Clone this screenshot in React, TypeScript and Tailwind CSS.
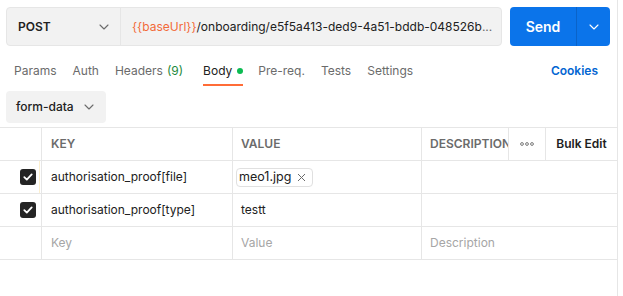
import React from "react";

const Chevron = ({ className = "" }: { className?: string }) => (
  <svg width="10" height="6" viewBox="0 0 10 6" className={className} fill="none">
    <path d="M1 1l4 4 4-4" stroke="currentColor" strokeWidth="1.1" strokeLinecap="round" strokeLinejoin="round" />
  </svg>
);

const Check = () => (
  <div className="w-[16px] h-[16px] rounded-[3px] bg-[#242424] flex items-center justify-center">
    <svg width="10" height="8" viewBox="0 0 10 8" fill="none">
      <path d="M1.3 4.2l2.5 2.4L8.7 1.4" stroke="white" strokeWidth="1.8" strokeLinecap="round" strokeLinejoin="round" />
    </svg>
  </div>
);

export default function App() {
  const font = { fontFamily: "Inter, 'Noto Sans', sans-serif" };
  return (
    <div className="w-[623px] h-[296px] bg-white flex overflow-hidden text-[12px] text-[#212121]" style={font}>
      <div className="w-[617px] flex flex-col">
        {/* Top bar */}
        <div className="flex pt-[7px] pl-[6px] pr-[7px] h-[46px]">
          <div className="w-[496px] h-[39px] flex bg-[#f2f2f2] border border-[#e6e6e6] rounded-[4px]">
            <div className="w-[114px] flex items-center justify-between pl-[11px] pr-[11px] border-r border-[#e6e6e6]">
              <span className="font-semibold text-[#212121]">POST</span>
              <Chevron className="text-[#6b6b6b]" />
            </div>
            <div className="flex-1 flex items-center pl-[11px] pr-[8px] overflow-hidden whitespace-nowrap">
              <span className="text-[#f26b3a]">{"{{baseUrl}}"}</span>
              <span className="text-[#212121]">/onboarding/e5f5a413-ded9-4a51-bddb-048526b</span>
              <span className="text-[#6b6b6b]">...</span>
            </div>
          </div>
          <div className="ml-[8px] w-[100px] h-[39px] flex bg-[#0b74ea] rounded-[4px] text-white">
            <div className="w-[67px] flex items-center justify-center border-r border-[#0a63c9] font-semibold text-[14px]">Send</div>
            <div className="flex-1 flex items-center justify-center">
              <Chevron />
            </div>
          </div>
        </div>

        {/* Tabs */}
        <div className="h-[41px] pt-[8px] flex items-stretch pl-[14px] pr-[19px] text-[#6b6b6b]">
          <div className="flex items-center">Params</div>
          <div className="flex items-center ml-[16px]">Auth</div>
          <div className="flex items-center ml-[16px]">
            Headers<span className="text-[#1e8a3c] ml-[4px]">(9)</span>
          </div>
          <div className="relative flex items-center ml-[20px] text-[#212121]">
            Body
            <span className="ml-[5px] w-[6px] h-[6px] rounded-full bg-[#0cbb52]" />
            <span className="absolute left-0 right-0 bottom-[1px] h-[2px] bg-[#ff6c37]" />
          </div>
          <div className="flex items-center ml-[15px]">Pre-req.</div>
          <div className="flex items-center ml-[16px]">Tests</div>
          <div className="flex items-center ml-[16px]">Settings</div>
          <div className="flex items-center ml-auto text-[#0265d2] font-semibold">Cookies</div>
        </div>

        {/* Body type */}
        <div className="pt-[4px] pl-[6px] h-[40px]">
          <div className="w-[100px] h-[32px] rounded-[4px] bg-[#f2f2f2] flex items-center justify-between pl-[10px] pr-[12px]">
            <span className="text-[#212121] font-medium">form-data</span>
            <Chevron className="text-[#6b6b6b]" />
          </div>
        </div>

        {/* Table */}
        <div className="border-t border-[#e6e6e6]">
          <div className="grid grid-cols-[42px_191px_189px_87px_37px_71px] h-[33px] border-b border-[#e6e6e6] font-semibold text-[#6b6b6b]">
            <div className="border-r border-[#e6e6e6]" />
            <div className="border-r border-[#e6e6e6] flex items-center pl-[9px]">KEY</div>
            <div className="border-r border-[#e6e6e6] flex items-center pl-[8px]">VALUE</div>
            <div className="border-r border-[#e6e6e6] flex items-center pl-[8px] overflow-hidden whitespace-nowrap">DESCRIPTION</div>
            <div className="border-r border-[#e6e6e6] flex items-center justify-center">
              <svg width="14" height="4" viewBox="0 0 14 4">
                <circle cx="2" cy="2" r="1.4" fill="none" stroke="#6b6b6b" strokeWidth="0.9" />
                <circle cx="7" cy="2" r="1.4" fill="none" stroke="#6b6b6b" strokeWidth="0.9" />
                <circle cx="12" cy="2" r="1.4" fill="none" stroke="#6b6b6b" strokeWidth="0.9" />
              </svg>
            </div>
            <div className="flex items-center justify-center text-[#212121]">Bulk Edit</div>
          </div>

          <div className="grid grid-cols-[42px_191px_189px_195px] h-[33px] border-b border-[#e6e6e6]">
            <div className="border-r border-[#e6e6e6] flex items-center justify-end pr-[5px] relative">
              <Check />
              <span className="absolute right-[1px] top-0 bottom-0 w-[1px] bg-[#fdf0cf]" />
            </div>
            <div className="border-r border-[#e6e6e6] flex items-center pl-[9px]">authorisation_proof[file]</div>
            <div className="border-r border-[#e6e6e6] flex items-center pl-[3px]">
              <div className="h-[19px] w-[77px] border border-[#e0e0e0] rounded-[4px] flex items-center pl-[2px] pr-[6px] justify-between text-[12.5px]">
                <span>meo1.jpg</span>
                <svg width="9" height="9" viewBox="0 0 9 9">
                  <path d="M1 1l7 7M8 1l-7 7" stroke="#6b6b6b" strokeWidth="1" />
                </svg>
              </div>
            </div>
            <div />
          </div>

          <div className="grid grid-cols-[42px_191px_189px_195px] h-[33px] border-b border-[#e6e6e6]">
            <div className="border-r border-[#e6e6e6] flex items-center justify-end pr-[5px]">
              <Check />
            </div>
            <div className="border-r border-[#e6e6e6] flex items-center pl-[9px]">authorisation_proof[type]</div>
            <div className="border-r border-[#e6e6e6] flex items-center pl-[8px]">testt</div>
            <div />
          </div>

          <div className="grid grid-cols-[42px_191px_189px_195px] h-[33px] border-b border-[#e6e6e6] text-[#a6a6a6]">
            <div className="border-r border-[#e6e6e6]" />
            <div className="border-r border-[#e6e6e6] flex items-center pl-[9px]">Key</div>
            <div className="border-r border-[#e6e6e6] flex items-center pl-[8px]">Value</div>
            <div className="flex items-center pl-[8px]">Description</div>
          </div>
        </div>
      </div>
      <div className="w-[1px] h-full bg-[#e6e6e6]" />
    </div>
  );
}
